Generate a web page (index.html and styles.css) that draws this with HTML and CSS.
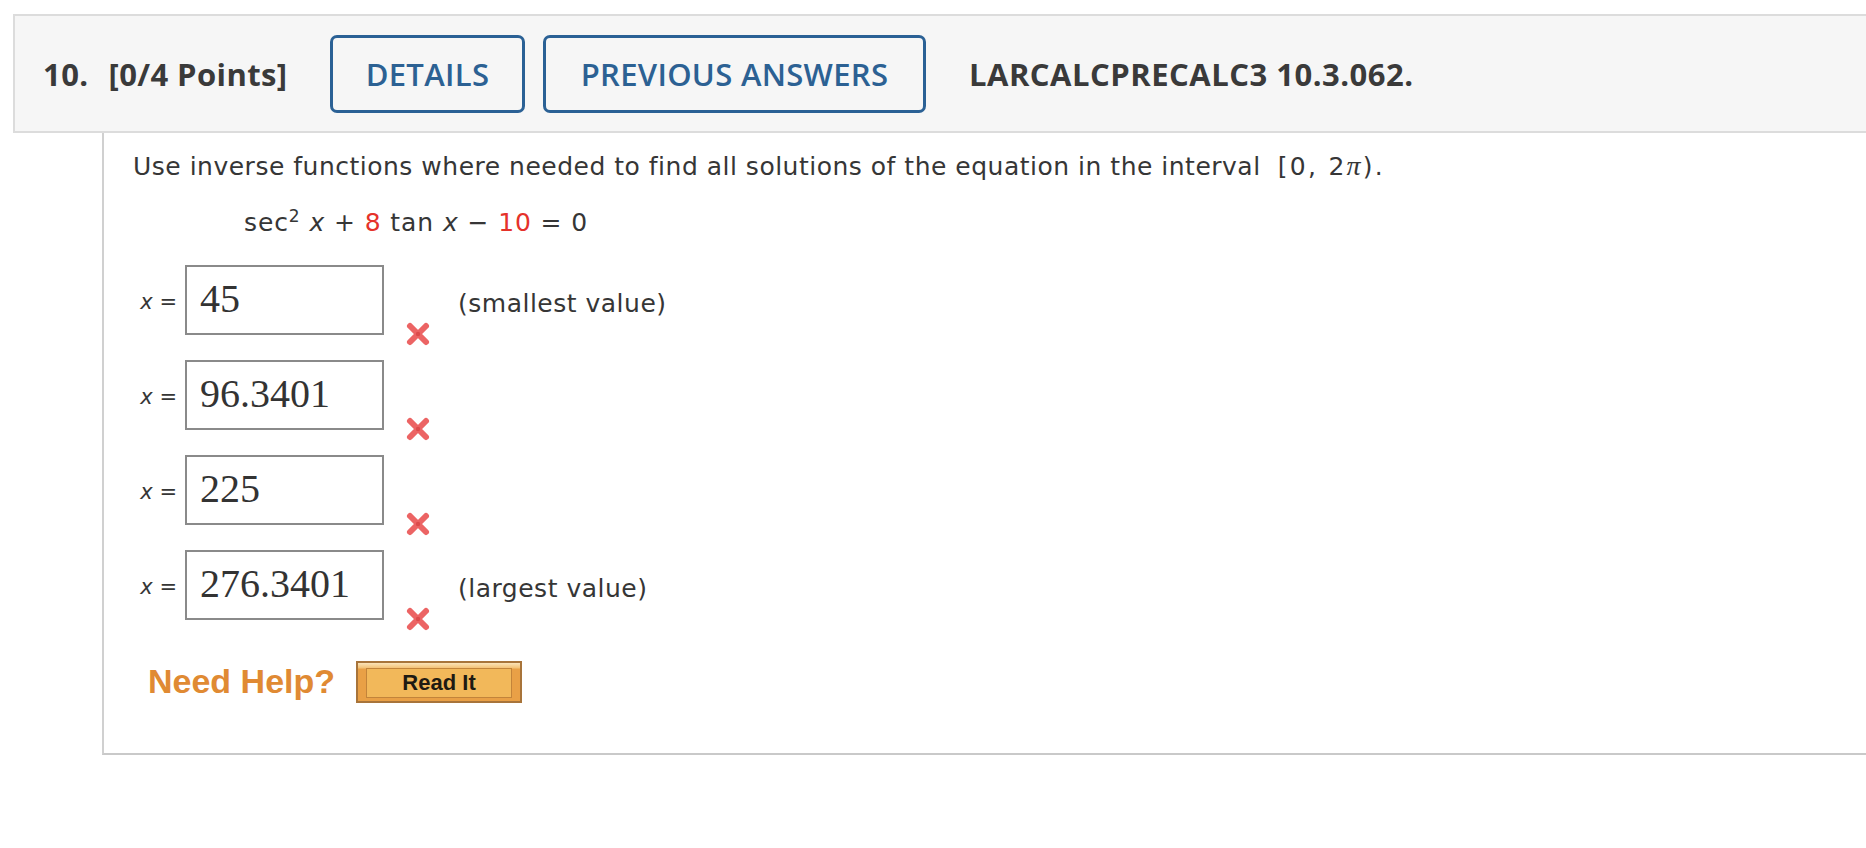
FILE: index.html
```html
<!DOCTYPE html>
<html>
<head>
<meta charset="utf-8">
<link rel="stylesheet" href="styles.css">
</head>
<body>
<div class="page">
  <div class="qhead">
    <span class="qtitle"><span class="qnum">10.</span><span class="qpts">[0/4 Points]</span></span>
    <button class="hbtn btn-details">DETAILS</button>
    <button class="hbtn btn-prev">PREVIOUS ANSWERS</button>
    <span class="qref">LARCALCPRECALC3 10.3.062.</span>
  </div>
  <div class="qbody">
    <p class="prompt">Use inverse functions where needed to find all solutions of the equation in the interval<span class="interval">[0, 2<i class="pi">π</i>).</span></p>
    <p class="equation">sec<sup>2</sup> <i>x</i> + <span class="red">8</span> tan <i>x</i> − <span class="red">10</span> = 0</p>
    <div class="answers">
      <div class="arow">
        <span class="alabel"><i>x</i> =</span>
        <div class="abox">45</div>
        <svg class="xmark" viewBox="0 0 26 26" width="26" height="26"><path d="M5 5 L21 21 M21 5 L5 21" stroke="#ec6464" stroke-width="6" stroke-linecap="round"/><circle cx="13" cy="13" r="2.2" fill="#dc4c4c"/></svg>
        <span class="anote">(smallest value)</span>
      </div>
      <div class="arow">
        <span class="alabel"><i>x</i> =</span>
        <div class="abox">96.3401</div>
        <svg class="xmark" viewBox="0 0 26 26" width="26" height="26"><path d="M5 5 L21 21 M21 5 L5 21" stroke="#ec6464" stroke-width="6" stroke-linecap="round"/><circle cx="13" cy="13" r="2.2" fill="#dc4c4c"/></svg>
      </div>
      <div class="arow">
        <span class="alabel"><i>x</i> =</span>
        <div class="abox">225</div>
        <svg class="xmark" viewBox="0 0 26 26" width="26" height="26"><path d="M5 5 L21 21 M21 5 L5 21" stroke="#ec6464" stroke-width="6" stroke-linecap="round"/><circle cx="13" cy="13" r="2.2" fill="#dc4c4c"/></svg>
      </div>
      <div class="arow">
        <span class="alabel"><i>x</i> =</span>
        <div class="abox">276.3401</div>
        <svg class="xmark" viewBox="0 0 26 26" width="26" height="26"><path d="M5 5 L21 21 M21 5 L5 21" stroke="#ec6464" stroke-width="6" stroke-linecap="round"/><circle cx="13" cy="13" r="2.2" fill="#dc4c4c"/></svg>
        <span class="anote">(largest value)</span>
      </div>
    </div>
    <div class="help">
      <span class="needhelp">Need Help?</span>
      <span class="readit"><span class="readit-in">Read It</span></span>
    </div>
  </div>
</div>
</body>
</html>
```

FILE: styles.css
```css
html, body {
  margin: 0;
  padding: 0;
  background: #ffffff;
}

.page {
  padding-top: 14px;
  overflow: hidden;
}

.qhead {
  margin-left: 13px;
  margin-right: -20px;
  height: 115px;
  border: 2px solid #dcdcdc;
  background: #f6f6f6;
  display: flex;
  align-items: center;
  padding-left: 28px;
  font-family: "Open Sans", "Liberation Sans", sans-serif;
  color: #3a3a3a;
}

.qtitle {
  width: 258px;
  white-space: nowrap;
}

.qnum, .qpts, .qref {
  font-size: 31px;
  font-weight: 700;
  letter-spacing: 0.4px;
}

.qpts {
  margin-left: 20px;
}

.hbtn {
  flex: none;
  height: 78px;
  border: 3px solid #2b6195;
  border-radius: 7px;
  background: transparent;
  color: #2c6193;
  font-family: "Open Sans", "Liberation Sans", sans-serif;
  font-size: 31px;
  font-weight: 600;
  letter-spacing: 0.3px;
  padding: 0;
  text-align: center;
}

.btn-details {
  width: 195px;
  margin-left: 29px;
}

.btn-prev {
  width: 383px;
  margin-left: 18px;
}

.qref {
  margin-left: 43px;
  white-space: nowrap;
  letter-spacing: 0.5px;
}

.qbody {
  margin-left: 102px;
  border-left: 2px solid #d0d0d0;
  border-bottom: 2px solid #c9c9c9;
  padding: 18px 0 50px 29px;
  font-family: "DejaVu Sans", sans-serif;
  font-size: 25px;
  letter-spacing: 0.5px;
  color: #363636;
}

.prompt {
  margin: 0;
  line-height: 30px;
  white-space: nowrap;
}

.interval {
  margin-left: 17px;
  letter-spacing: 2.3px;
}

.pi {
  font-family: "Liberation Serif", serif;
  font-size: 28px;
  letter-spacing: 2px;
}

.equation {
  margin: 26px 0 0 111px;
  line-height: 30px;
  letter-spacing: 0.9px;
}

.equation sup {
  font-size: 17px;
  line-height: 0;
}

.red {
  color: #e5322a;
}

.answers {
  margin-top: 27px;
  display: flex;
  flex-direction: column;
  gap: 25px;
}

.arow {
  display: flex;
  align-items: flex-start;
  height: 70px;
}

.alabel {
  width: 44px;
  padding-right: 8px;
  text-align: right;
  font-family: "DejaVu Sans", sans-serif;
  font-size: 21px;
  letter-spacing: 0;
  line-height: 25px;
  margin-top: 25px;
}

.abox {
  flex: none;
  width: 182px;
  height: 56px;
  border: 2px solid #8a8a8a;
  padding: 10px 0 0 13px;
  font-family: "Liberation Serif", serif;
  font-size: 40px;
  letter-spacing: 0;
  line-height: 44px;
  color: #333333;
}

.xmark {
  margin-left: 21px;
  margin-top: 56px;
  flex: none;
}

.anote {
  margin-left: 27px;
  margin-top: 24px;
  line-height: 30px;
  white-space: nowrap;
}

.help {
  margin-top: 41px;
  display: flex;
  align-items: flex-start;
}

.needhelp {
  margin-left: 15px;
  font-family: "Liberation Sans", sans-serif;
  font-weight: 700;
  font-size: 34px;
  letter-spacing: 0;
  line-height: 40px;
  color: #e08a33;
}

.readit {
  margin-left: 21px;
  width: 162px;
  border: 2px solid #a8743a;
  background: linear-gradient(#fbe3b8 0px, #f3c276 5px, #e9a046 6px, #e9a046 100%);
  display: flex;
}

.readit-in {
  flex: 1;
  margin: 5px 8px 3px;
  border: 1px solid #c3843a;
  background: #f2b85a;
  text-align: center;
  font-family: "Liberation Sans", sans-serif;
  font-weight: 700;
  font-size: 22px;
  letter-spacing: 0;
  line-height: 28px;
  color: #1e1a12;
}
```
